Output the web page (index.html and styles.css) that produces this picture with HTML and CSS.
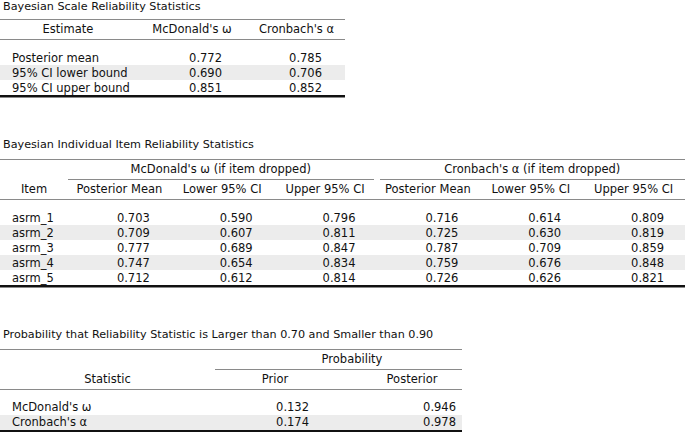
FILE: index.html
```html
<!DOCTYPE html>
<html>
<head>
<meta charset="utf-8">
<link rel="stylesheet" href="styles.css">
</head>
<body>
<section class="block b1">
  <div class="title">Bayesian Scale Reliability Statistics</div>
  <table class="t t1">
    <colgroup><col class="c-est"><col class="c-mc"><col class="c-cr"></colgroup>
    <thead>
      <tr class="hrow"><th>Estimate</th><th>McDonald's ω</th><th>Cronbach's α</th></tr>
    </thead>
    <tbody>
      <tr class="spacer"><td></td><td></td><td></td></tr>
      <tr><td class="lbl">Posterior mean</td><td class="num p26">0.772</td><td class="num p23">0.785</td></tr>
      <tr class="alt"><td class="lbl">95% CI lower bound</td><td class="num p26">0.690</td><td class="num p23">0.706</td></tr>
      <tr class="last"><td class="lbl">95% CI upper bound</td><td class="num p26">0.851</td><td class="num p23">0.852</td></tr>
    </tbody>
  </table>
</section>

<section class="block b2">
  <div class="title">Bayesian Individual Item Reliability Statistics</div>
  <table class="t t2">
    <colgroup><col class="c-item"><col class="c-v"><col class="c-v"><col class="c-v"><col class="c-v"><col class="c-v"><col class="c-v"></colgroup>
    <thead>
      <tr class="grow">
        <th rowspan="2" class="rs">Item</th>
        <th colspan="3" class="grp"><div class="gl gl-first">McDonald's ω (if item dropped)</div></th>
        <th colspan="3" class="grp"><div class="gl gl-last">Cronbach's α (if item dropped)</div></th>
      </tr>
      <tr class="hrow sub">
        <th>Posterior Mean</th><th>Lower 95% CI</th><th>Upper 95% CI</th>
        <th>Posterior Mean</th><th>Lower 95% CI</th><th>Upper 95% CI</th>
      </tr>
    </thead>
    <tbody>
      <tr class="spacer"><td colspan="7"></td></tr>
      <tr><td class="lbl">asrm_1</td><td class="num">0.703</td><td class="num">0.590</td><td class="num">0.796</td><td class="num">0.716</td><td class="num">0.614</td><td class="num">0.809</td></tr>
      <tr class="alt"><td class="lbl">asrm_2</td><td class="num">0.709</td><td class="num">0.607</td><td class="num">0.811</td><td class="num">0.725</td><td class="num">0.630</td><td class="num">0.819</td></tr>
      <tr><td class="lbl">asrm_3</td><td class="num">0.777</td><td class="num">0.689</td><td class="num">0.847</td><td class="num">0.787</td><td class="num">0.709</td><td class="num">0.859</td></tr>
      <tr class="alt"><td class="lbl">asrm_4</td><td class="num">0.747</td><td class="num">0.654</td><td class="num">0.834</td><td class="num">0.759</td><td class="num">0.676</td><td class="num">0.848</td></tr>
      <tr class="last"><td class="lbl">asrm_5</td><td class="num">0.712</td><td class="num">0.612</td><td class="num">0.814</td><td class="num">0.726</td><td class="num">0.626</td><td class="num">0.821</td></tr>
    </tbody>
  </table>
</section>

<section class="block b3">
  <div class="title">Probability that Reliability Statistic is Larger than 0.70 and Smaller than 0.90</div>
  <table class="t t3">
    <colgroup><col class="c-stat"><col class="c-prior"><col class="c-post"></colgroup>
    <thead>
      <tr class="grow">
        <th rowspan="2" class="rs">Statistic</th>
        <th colspan="2" class="grp"><div class="gl gl-prob">Probability</div></th>
      </tr>
      <tr class="hrow sub">
        <th>Prior</th><th class="h-post">Posterior</th>
      </tr>
    </thead>
    <tbody>
      <tr class="spacer"><td colspan="3"></td></tr>
      <tr><td class="lbl">McDonald's ω</td><td class="num p26">0.132</td><td class="num p6">0.946</td></tr>
      <tr class="alt last"><td class="lbl">Cronbach's α</td><td class="num p26">0.174</td><td class="num p6">0.978</td></tr>
    </tbody>
  </table>
</section>
</body>
</html>
```

FILE: styles.css
```css
html, body {
  margin: 0;
  padding: 0;
  background: #ffffff;
}
body {
  font-family: "DejaVu Sans", "Liberation Sans", sans-serif;
  font-size: 11.5px;
  color: #111111;
  width: 685px;
}
.block { display: block; }
.b2 { margin-top: 41px; }
.b3 { margin-top: 41px; }
.title {
  font-size: 11.2px;
  line-height: 14px;
  height: 14px;
  padding-left: 3px;
  margin-bottom: 5px;
  white-space: nowrap;
}
.b2 .title { margin-bottom: 7px; }
.b3 .title { margin-bottom: 7px; }

.t {
  border-collapse: separate;
  border-spacing: 0;
  table-layout: fixed;
}
.t th, .t td {
  padding: 0;
  white-space: nowrap;
  font-weight: normal;
}
.t1 { width: 345px; }
.t2 { width: 685px; }
.t3 { width: 462px; }

.c-est { width: 136px; }
.c-mc { width: 112px; }
.c-cr { width: 97px; }
.c-item { width: 68px; }
.c-v { width: 102.83px; }
.c-stat { width: 215px; }
.c-prior { width: 120px; }
.c-post { width: 127px; }

.t thead tr:first-child th { border-top: 1px solid #8a8a8a; }
.hrow th {
  line-height: 19px;
  text-align: center;
  border-bottom: 1px solid #8a8a8a;
}
.rs {
  vertical-align: bottom;
  text-align: center;
  line-height: 19px;
  border-bottom: 1px solid #8a8a8a;
}
.grp { text-align: center; }
.gl {
  line-height: 19px;
  border-bottom: 1px solid #8a8a8a;
  margin: 0 3px;
}
.gl-first { margin-left: 0; }
.gl-last { margin-right: 0; }
.gl-prob { margin: 0; padding-left: 27px; }
.h-post { padding-left: 27px !important; }

.spacer td { height: 10px; line-height: 10px; }
tbody tr td { line-height: 15px; }
.t1 tbody tr td, .t2 tbody tr td { padding-top: 1px; line-height: 14px; }
.t1 .spacer td, .t2 .spacer td { padding-top: 0; line-height: 10px; }
.alt td { background: #ececec; }
.lbl { padding-left: 12px !important; text-align: left; }
.num { text-align: right; padding-right: 21px !important; }
.num.p26 { padding-right: 26px !important; }
.num.p23 { padding-right: 23px !important; }
.num.p6 { padding-right: 6px !important; }
.last td {
  border-bottom: 2px solid #111111;
  box-shadow: 0 1px 0 #8a8a8a;
}
```
